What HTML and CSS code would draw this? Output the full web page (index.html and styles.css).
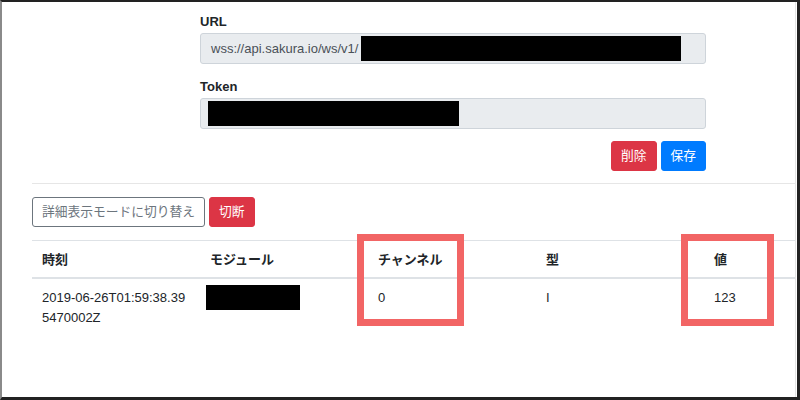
FILE: index.html
```html
<!DOCTYPE html>
<html lang="ja">
<head>
<meta charset="utf-8">
<title>sakura.io WebSocket</title>
<link rel="stylesheet" href="styles.css">
</head>
<body>
<div class="frame">
  <div class="page">
    <div class="settings">
      <div class="form-group">
        <label class="label">URL</label>
        <div class="input"><span class="input-text">wss://api.sakura.io/ws/v1/</span><span class="redact redact-url"></span></div>
      </div>
      <div class="form-group">
        <label class="label">Token</label>
        <div class="input"><span class="redact redact-token"></span></div>
      </div>
      <div class="actions">
        <button class="btn btn-danger">削除</button>
        <button class="btn btn-primary">保存</button>
      </div>
    </div>
    <div class="main">
      <hr class="rule">
      <div class="toolbar">
        <button class="btn btn-outline">詳細表示モードに切り替え</button>
        <button class="btn btn-danger">切断</button>
      </div>
      <table class="table">
        <thead>
          <tr><th>時刻</th><th>モジュール</th><th>チャンネル</th><th>型</th><th>値</th></tr>
        </thead>
        <tbody>
          <tr><td class="time">2019-06-26T01:59:38.395470002Z</td><td><span class="redact redact-module"></span></td><td>0</td><td>I</td><td>123</td></tr>
        </tbody>
      </table>
    </div>
  </div>
  <div class="highlight hl-channel"></div>
  <div class="highlight hl-value"></div>
</div>
</body>
</html>
```
FILE: styles.css
```css
html, body {
  margin: 0;
  padding: 0;
  background: #ffffff;
}
body {
  font-family: "Liberation Sans", "Noto Sans CJK JP", sans-serif;
  font-size: 13px;
  line-height: 19.5px;
  color: #212529;
}
.frame {
  position: relative;
  width: 800px;
  height: 400px;
  box-sizing: border-box;
  border-top: 2px solid #222222;
  border-left: 2px solid #8a8a8a;
  border-right: 3px solid #222222;
  border-bottom: 3px solid #222222;
  overflow: hidden;
  display: flex;
}
.page {
  flex: 1;
  margin-right: 1px;
  border-right: 1px solid #e4e4e4;
  overflow: hidden;
}
.settings {
  width: 506px;
  margin-left: 198px;
  padding-top: 10px;
}
.form-group {
  margin-bottom: 13px;
}
.label {
  display: block;
  font-weight: bold;
  margin-bottom: 1.5px;
}
.input {
  height: 31px;
  box-sizing: border-box;
  background: #e9ecef;
  border: 1px solid #ced4da;
  border-radius: 3px;
  padding: 0 10px;
  display: flex;
  align-items: center;
  color: #495057;
  overflow: hidden;
  white-space: nowrap;
}
.redact {
  display: inline-block;
  background: #000000;
}
.redact-url {
  width: 320px;
  height: 25px;
  margin-left: 3px;
}
.redact-token {
  width: 251px;
  height: 25px;
  margin-left: -3px;
}
.actions {
  display: flex;
  justify-content: flex-end;
  gap: 4px;
  margin-top: -1px;
}
.btn {
  height: 30px;
  box-sizing: border-box;
  padding: 0 9px;
  font-family: "Liberation Sans", "Noto Sans CJK JP", sans-serif;
  font-size: 12.75px;
  border-radius: 3px;
  border: 1px solid transparent;
  line-height: 28px;
  cursor: pointer;
}
.btn-danger {
  background: #dc3545;
  border-color: #dc3545;
  color: #ffffff;
}
.btn-primary {
  background: #007bff;
  border-color: #007bff;
  color: #ffffff;
}
.btn-outline {
  background: #ffffff;
  border-color: #6c757d;
  color: #6c757d;
}
.main {
  padding-left: 30px;
}
.rule {
  margin: 12px 0 13px;
  border: 0;
  border-top: 1px solid #e6e6e6;
  height: 0;
}
.toolbar {
  display: flex;
  gap: 4px;
  margin-bottom: 13px;
}
.table {
  width: 840px;
  table-layout: fixed;
  border-collapse: collapse;
}
.table th,
.table td {
  width: 148px;
  padding: 9px 10px;
  text-align: left;
  vertical-align: top;
  border-top: 1px solid #dee2e6;
}
.table th {
  font-weight: bold;
  padding-bottom: 7.5px;
  border-bottom: 2px solid #dee2e6;
}
.table td {
  color: #212529;
}
.time {
  word-break: break-all;
}
.redact-module {
  display: block;
  width: 94px;
  height: 25px;
  margin: -3px 0 0 -4px;
}
.highlight {
  position: absolute;
  box-sizing: border-box;
  border: 7px solid #f26565;
}
.hl-channel {
  left: 355px;
  top: 232px;
  width: 107px;
  height: 92px;
}
.hl-value {
  left: 679px;
  top: 232px;
  width: 93px;
  height: 92px;
}
```
